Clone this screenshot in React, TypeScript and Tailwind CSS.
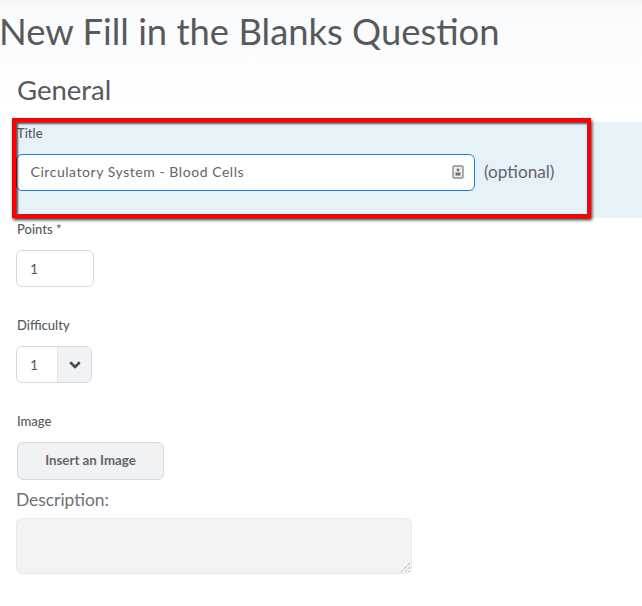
import { ChevronDown } from "lucide-react";

function FieldLabel({ children }: { children: React.ReactNode }) {
  return <div className="text-[13px] leading-4 font-medium text-[#565a5c]">{children}</div>;
}

export default function App() {
  return (
    <div className="relative w-[642px] h-[606px] overflow-hidden bg-white font-['Lato','Open_Sans',sans-serif] text-[#494c4e]">
      <div className="h-[100px] bg-gradient-to-b from-[#f9fafc] to-white">
        <div className="h-[3px] bg-[#f4f5f7]" />
        <h1 className="mt-[8px] -ml-px text-[36.4px] leading-10 font-normal whitespace-nowrap text-[#565a5c]">New Fill in the Blanks Question</h1>
        <h2 className="mt-[23px] ml-[17px] text-[27.5px] leading-8 font-normal text-[#565a5c]">General</h2>
      </div>

      <div className="mt-[22px] ml-[15px] h-[96px] bg-[#e6f1f8] pl-[1px]">
        <div className="pt-[3px] pl-[1px]">
          <FieldLabel>Title</FieldLabel>
        </div>
        <div className="mt-[13px] flex items-center">
          <div className="w-[459px] h-[37px] bg-white border border-[#1c84c9] rounded-md flex items-center justify-between pl-[13.5px] pr-[10px]">
            <span className="-mt-[2px] text-[14px] tracking-[0.55px] text-[#62666a]">Circulatory System - Blood Cells</span>
            <svg width="12" height="14" viewBox="0 0 12 14" className="-mt-[1px] text-[#8a8d8f]">
              <rect x="1" y="1" width="10" height="12" rx="1" fill="#eceded" stroke="currentColor" strokeWidth="1.4" />
              <circle cx="6" cy="5" r="1.4" fill="#6e7275" />
              <rect x="3.5" y="7.5" width="5" height="3" fill="#6e7275" />
            </svg>
          </div>
          <span className="ml-[9px] -mt-[2px] text-[17.2px] text-[#62666a]">(optional)</span>
        </div>
      </div>

      <div className="pl-[17px] pt-[3px]">
        <FieldLabel>Points *</FieldLabel>
        <div className="mt-[13px] -ml-px w-[78px] h-[37px] border border-[#d3d9e3] rounded-md flex items-center pl-[13px] text-[14px] text-[#565a5c]">
          <span className="-mt-[1px]">1</span>
        </div>

        <div className="mt-[30px]">
          <FieldLabel>Difficulty</FieldLabel>
        </div>
        <div className="mt-[13px] -ml-px w-[76px] h-[37px] border border-[#d3d9e3] rounded-md flex items-center overflow-hidden text-[14px] text-[#565a5c]">
          <div className="w-[40px] pl-[13px] -mt-[1px]">1</div>
          <div className="flex-1 h-full bg-[#f1f2f4] border-l border-[#e3e6eb] flex items-center justify-center">
            <ChevronDown size={16} strokeWidth={4} className="text-[#494c4e]" />
          </div>
        </div>

        <div className="mt-[30px]">
          <FieldLabel>Image</FieldLabel>
        </div>
        <button className="mt-[13px] w-[147px] h-[38px] bg-[#f1f2f4] border border-[#d3d9e3] rounded-md text-[13.3px] font-bold text-[#62666a]">
          Insert an Image
        </button>

        <div className="mt-[8px] -ml-px text-[17.4px] leading-6 text-[#6e7275]">Description:</div>
        <div className="relative mt-[6px] -ml-px w-[396px] h-[56px] bg-[#f4f3f2] border border-[#e8eaee] rounded-md">
          <svg width="9" height="9" viewBox="0 0 9 9" className="absolute right-[1px] bottom-[1px]">
            <path d="M0 9 9 0M4 9 9 4M7.5 9 9 7.5" stroke="#8f8f8f" strokeWidth="1" strokeDasharray="1 1" />
          </svg>
        </div>
      </div>

      <div className="absolute left-[12px] top-[118px] w-[579px] h-[100px] border-4 border-[#ff0000] shadow-[1px_2px_3px_rgba(0,0,0,0.8),inset_2px_2px_2px_rgba(0,0,0,0.65)]" />
    </div>
  );
}
